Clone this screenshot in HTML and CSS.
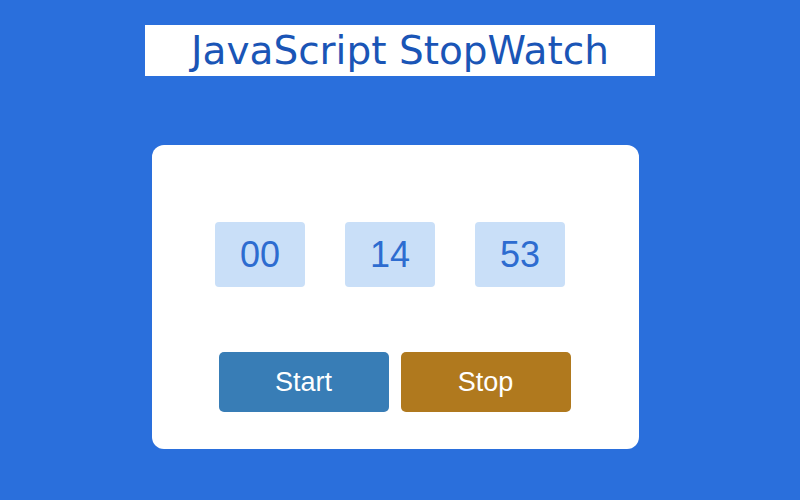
FILE: index.html
```html
<!DOCTYPE html>
<html lang="en">
  <head>
    <meta charset="UTF-8" />
    <meta name="viewport" content="width=device-width, initial-scale=1.0" />
    <title>JavaScript StopWatch</title>
    <link rel="stylesheet" href="styles.css">
  </head>
  <body>
    <h1 class="title">JavaScript StopWatch</h1>

    <div class="watch">
      <div class="time">
        <span class="unit" id="hours">00</span>
        <span class="unit" id="minutes">14</span>
        <span class="unit" id="seconds">53</span>
      </div>
      <div class="controls">
        <button class="btn start" id="startBtn">Start</button>
        <button class="btn stop" id="stopBtn">Stop</button>
      </div>
    </div>

    <script>
      const hoursEl = document.getElementById("hours");
      const minutesEl = document.getElementById("minutes");
      const secondsEl = document.getElementById("seconds");

      let total = 14 * 60 + 53;
      let timer = null;

      function pad(n) {
        return String(n).padStart(2, "0");
      }

      function render() {
        hoursEl.textContent = pad(Math.floor(total / 3600));
        minutesEl.textContent = pad(Math.floor((total % 3600) / 60));
        secondsEl.textContent = pad(total % 60);
      }

      document.getElementById("startBtn").addEventListener("click", () => {
        if (timer) return;
        timer = setInterval(() => {
          total++;
          render();
        }, 1000);
      });

      document.getElementById("stopBtn").addEventListener("click", () => {
        clearInterval(timer);
        timer = null;
      });

      render();
    </script>
  </body>
</html>
```

FILE: styles.css
```css
* {
  box-sizing: border-box;
  margin: 0;
  padding: 0;
}

body {
  font-family: "Liberation Sans", Arial, sans-serif;
  background-color: #2a6fdc;
  padding-top: 25px;
}

.title {
  width: 510px;
  height: 51px;
  margin: 0 auto;
  background-color: #fff;
  color: #1a55b6;
  font-family: "DejaVu Sans", Verdana, sans-serif;
  font-size: 39px;
  font-weight: normal;
  line-height: 51px;
  text-align: center;
}

.watch {
  width: 487px;
  height: 304px;
  margin: 69px 0 0 152px;
  background-color: #fff;
  border-radius: 12px;
  padding-top: 77px;
}

.time {
  display: flex;
  justify-content: center;
  gap: 40px;
  padding-right: 11px;
}

.unit {
  width: 90px;
  height: 65px;
  background-color: #c9dff8;
  color: #2d6cd0;
  border-radius: 4px;
  font-size: 36px;
  line-height: 65px;
  text-align: center;
}

.controls {
  display: flex;
  justify-content: center;
  gap: 12px;
  margin-top: 65px;
  padding-right: 2px;
}

.btn {
  width: 170px;
  height: 60px;
  border: none;
  border-radius: 5px;
  color: #fff;
  font-family: "Liberation Sans", Arial, sans-serif;
  font-size: 27px;
  cursor: pointer;
}

.start {
  background-color: #387db6;
}

.stop {
  background-color: #b0791e;
}
```
